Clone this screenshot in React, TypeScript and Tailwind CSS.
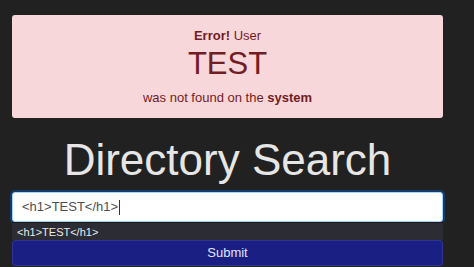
import React from "react";

export default function App() {
  return (
    <div
      className="w-[474px] h-[267px] overflow-hidden bg-[#212121] relative"
      style={{ fontFamily: '"Liberation Sans", Arial, sans-serif' }}
    >
      <div className="ml-[12px] w-[431px] pt-[15px]">
        <div className="bg-[#f8d7da] text-[#721c24] rounded-[3px] pt-[12px] pb-[11px] text-center">
          <div className="text-[13px] leading-[18px]">
            <b>Error!</b> User
          </div>
          <div className="mt-[1px] text-[31px] leading-[36px]">TEST</div>
          <div className="mt-[7px] text-[13px] leading-[18px]">
            was not found on the <b>system</b>
          </div>
        </div>

        <h1 className="mt-[16px] text-center text-[44px] leading-[52px] text-[#e6e6e6] font-normal">
          Directory Search
        </h1>

        <div className="relative mt-[6px]">
          <div className="h-[30px] bg-white rounded-[3px] border border-[#a9d4ff] shadow-[0_0_0_2px_rgba(0,90,200,0.45)] flex items-center pl-[9px] text-[13px] text-[#495057]">
            <span>&lt;h1&gt;TEST&lt;/h1&gt;</span>
            <span className="inline-block w-[1px] h-[15px] bg-[#333] ml-[1px]" />
          </div>
          <div className="absolute left-0 right-0 top-[30px] h-[18px] bg-[#2b2c34] border-t border-[#1a1a1e] flex items-center pl-[5px] pt-[1px] text-[11px] text-[#ececec] z-10">
            &lt;h1&gt;TEST&lt;/h1&gt;
          </div>
          <button className="mt-[18px] w-full h-[26px] bg-[#1a1f84] border border-[#2f358f] rounded-[3px] text-[13px] text-[#e4e4ff] flex items-center justify-center">
            Submit
          </button>
        </div>
      </div>
    </div>
  );
}
